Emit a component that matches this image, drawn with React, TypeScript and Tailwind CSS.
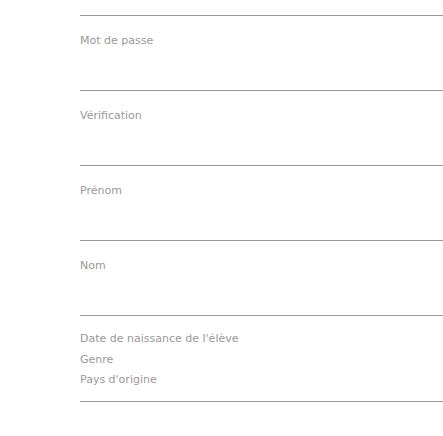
const FIELDS = ["Mot de passe", "Vérification", "Prénom", "Nom"];

export default function App() {
    return (
        <div className="min-h-screen bg-white pl-[80px] pt-[15px] font-['DejaVu_Sans',sans-serif] text-[11px] text-[#999999]">
            {FIELDS.map((label) => (
                <div key={label} className="h-[75px] border-t border-[#999999] pt-[15px] leading-[20px]">
                    {label}
                </div>
            ))}

            {/* student details */}
            <div className="h-[86px] border-t border-[#999999] pt-[13px] leading-[20.5px]">
                <div>Date de naissance de l'élève</div>
                <div>Genre</div>
                <div>Pays d'origine</div>
            </div>

            <div className="border-t border-[#999999]" />
        </div>
    );
}
